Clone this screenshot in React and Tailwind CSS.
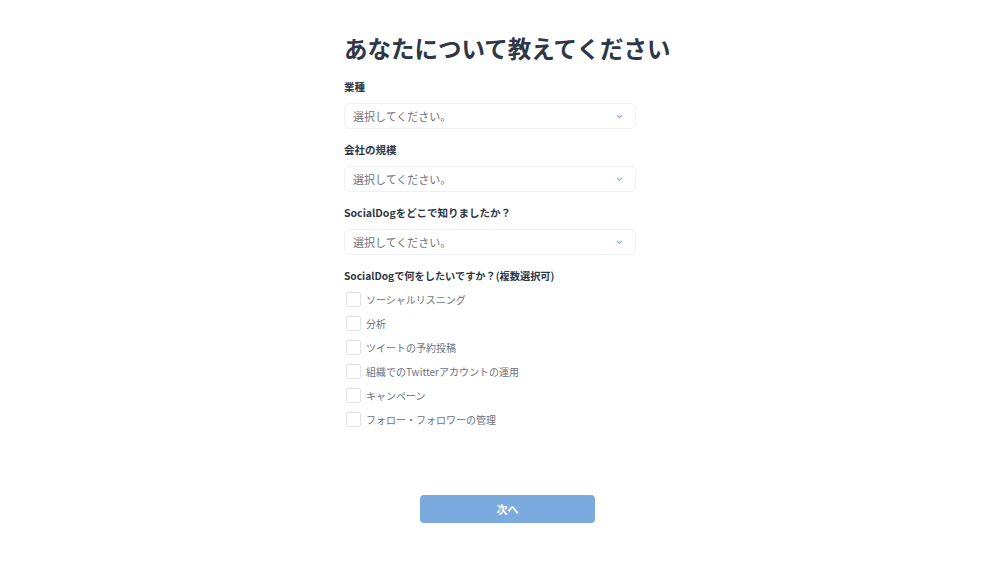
import React, { useState } from 'react';

const font = { fontFamily: '"Noto Sans CJK JP", "Noto Sans", sans-serif' };

const options = [
  'ソーシャルリスニング',
  '分析',
  'ツイートの予約投稿',
  '組織でのTwitterアカウントの運用',
  'キャンペーン',
  'フォロー・フォロワーの管理',
];

function SelectBox({ label }) {
  return (
    <div>
      <p className="text-[10.5px] leading-[16px] font-bold text-[#2d3748]">{label}</p>
      <div className="mt-2 flex h-[26px] w-[292px] items-center justify-between rounded-md border border-[#edf0f4] pl-2 pr-3">
        <span className="text-[11px] text-[#6b7280]">選択してください。</span>
        <svg width="7" height="5" viewBox="0 0 7 5" fill="none">
          <path d="M1 1l2.5 2.5L6 1" stroke="#93b4e0" strokeWidth="1.2" />
        </svg>
      </div>
    </div>
  );
}

export default function App() {
  const [checked, setChecked] = useState([]);

  const toggle = (idx) => {
    setChecked(checked.includes(idx) ? checked.filter((i) => i !== idx) : [...checked, idx]);
  };

  return (
    <div className="min-h-screen bg-white flex justify-center" style={font}>
      <div className="w-[312px] pt-[32px]">
        <h1 className="text-[23.5px] leading-[32px] font-bold text-[#2d3748] whitespace-nowrap">
          あなたについて教えてください
        </h1>

        {/* Formulaire */}
        <div className="mt-[15px] flex flex-col gap-[13px]">
          <SelectBox label="業種" />
          <SelectBox label="会社の規模" />
          <SelectBox label="SocialDogをどこで知りましたか？" />
        </div>

        <p className="mt-[13px] text-[10.2px] leading-[16px] font-bold text-[#2d3748]">
          SocialDogで何をしたいですか？(複数選択可)
        </p>
        <ul className="mt-[3px]">
          {options.map((opt, idx) => (
            <li key={idx} className="flex h-[24px] items-center gap-[5px] pl-[2px]">
              <button
                type="button"
                onClick={() => toggle(idx)}
                className={`h-[15px] w-[15px] rounded-[2px] border ${checked.includes(idx) ? 'border-[#7aaade] bg-[#7aaade]' : 'border-[#dfe3e8] bg-white'}`}
              />
              <span className="text-[10px] text-[#6b7280]">{opt}</span>
            </li>
          ))}
        </ul>

        <button
          type="button"
          className="mt-[64px] ml-[76px] h-[28px] w-[175px] rounded-[4px] bg-[#7aaade] text-[11px] font-bold text-white"
        >
          次へ
        </button>
      </div>
    </div>
  );
}
